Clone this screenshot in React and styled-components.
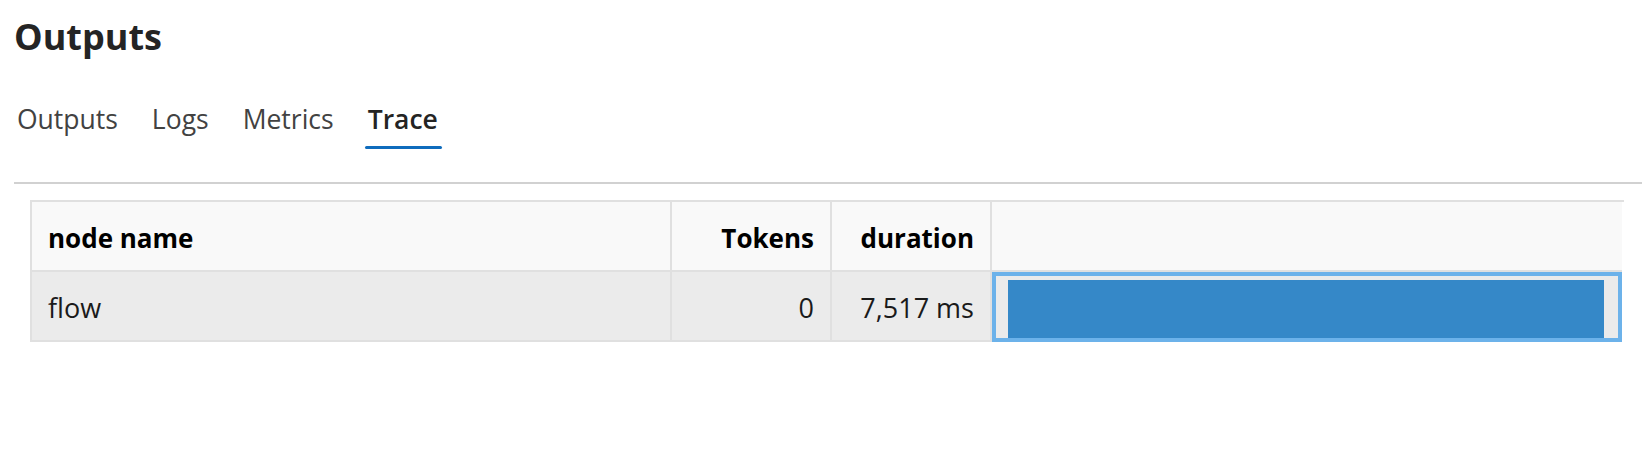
import styled, { createGlobalStyle } from "styled-components";

const GlobalStyle = createGlobalStyle`
  html, body {
    margin: 0;
    padding: 0;
    background: #ffffff;
  }
  body {
    font-family: "Open Sans", "Noto Sans", "Liberation Sans", sans-serif;
    color: #242424;
  }
`;

const Page = styled.div`
  padding: 16px 0 0 14px;
`;

const Title = styled.h1`
  margin: 0;
  font-size: 36px;
  line-height: 42px;
  font-weight: 700;
  color: #242424;
`;

const TabList = styled.div`
  display: flex;
  margin: 33px 0 0 -14px;
`;

const Tab = styled.div`
  position: relative;
  padding: 10px 17px 12px;
  font-size: 26.5px;
  line-height: 36px;
  font-weight: ${(p) => (p.$active ? 600 : 400)};
  color: ${(p) => (p.$active ? "#242424" : "#424242")};
  cursor: pointer;

  &::after {
    content: "";
    display: ${(p) => (p.$active ? "block" : "none")};
    position: absolute;
    left: 14px;
    right: 13px;
    bottom: 0;
    height: 3px;
    border-radius: 2px;
    background: #0f6cbd;
  }
`;

const Divider = styled.div`
  height: 2px;
  margin-top: 33px;
  background: #d1d1d1;
`;

const Grid = styled.div`
  display: grid;
  grid-template-columns: 640px 160px 160px 630px;
  width: 1592px;
  margin: 16px 0 0 16px;
  border-top: 2px solid #e0e0e0;
  border-left: 2px solid #e0e0e0;
`;

const Cell = styled.div`
  display: flex;
  align-items: center;
  justify-content: ${(p) => (p.$right ? "flex-end" : "flex-start")};
  padding: 4px 16px 0;
  box-sizing: border-box;
  height: 70px;
  border-right: 2px solid #e0e0e0;
  border-bottom: 2px solid #e0e0e0;
  background: ${(p) => (p.$head ? "#f9f9f9" : "#ebebeb")};
  font-size: ${(p) => (p.$head ? "26px" : "27px")};
  line-height: 36px;
  font-weight: ${(p) => (p.$head ? 700 : 400)};
  color: ${(p) => (p.$head ? "#000000" : "#1a1a1a")};
  white-space: nowrap;
`;

const HeadEmpty = styled.div`
  height: 70px;
  box-sizing: border-box;
  border-bottom: 2px solid #e0e0e0;
  background: #f9f9f9;
`;

const BarCell = styled.div`
  height: 70px;
  box-sizing: border-box;
  padding: 4px 14px 0 12px;
  border: 4px solid #6cb2ea;
  background: #ebebeb;
`;

const Bar = styled.div`
  height: 100%;
  background: #3588c8;
`;

const tabs = ["Outputs", "Logs", "Metrics", "Trace"];

const rows = [{ name: "flow", tokens: 0, duration: 7517, share: 1 }];

export default function App() {
  return (
    <Page>
      <GlobalStyle />
      <Title>Outputs</Title>
      <TabList>
        {tabs.map((t) => (
          <Tab key={t} $active={t === "Trace"}>
            {t}
          </Tab>
        ))}
      </TabList>
      <Divider />
      <Grid>
        <Cell $head>node name</Cell>
        <Cell $head $right>Tokens</Cell>
        <Cell $head $right>duration</Cell>
        <HeadEmpty />
        {rows.map((r) => [
          <Cell key={r.name + "n"}>{r.name}</Cell>,
          <Cell key={r.name + "t"} $right>
            {r.tokens}
          </Cell>,
          <Cell key={r.name + "d"} $right>
            {r.duration.toLocaleString("en-US")} ms
          </Cell>,
          <BarCell key={r.name + "b"}>
            <Bar style={{ width: `${r.share * 100}%` }} />
          </BarCell>,
        ])}
      </Grid>
    </Page>
  );
}
